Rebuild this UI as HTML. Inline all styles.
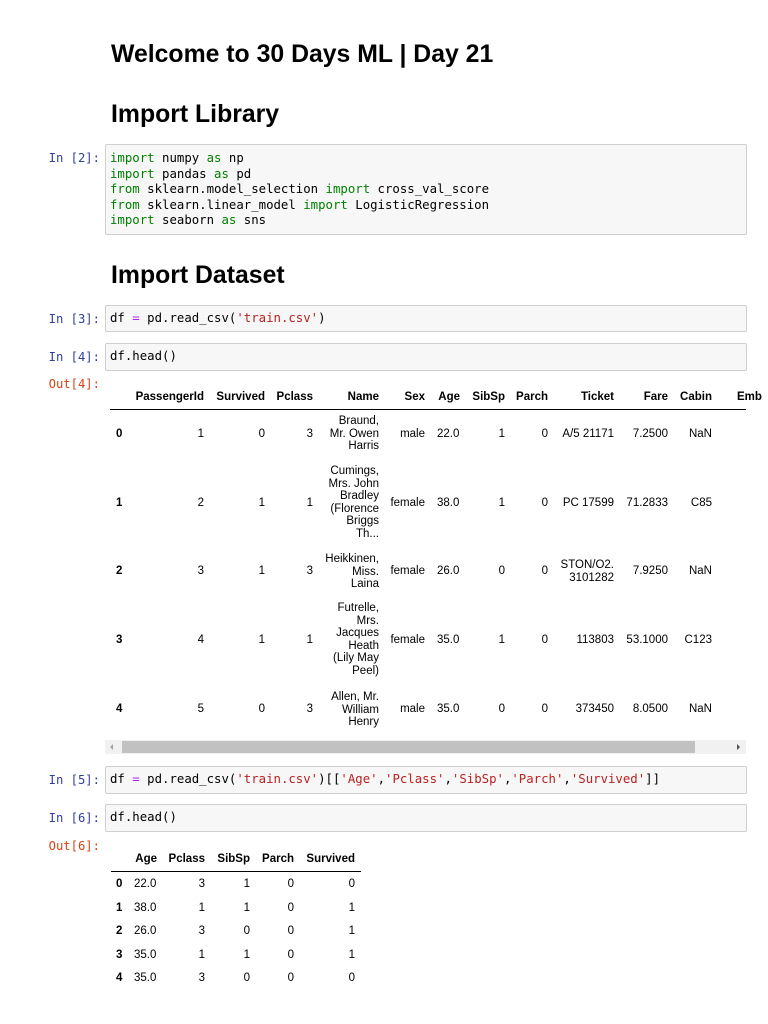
<!DOCTYPE html>
<html><head><meta charset="utf-8"><style>
body{margin:0;width:768px;height:1024px;background:#fff;position:relative;overflow:hidden;font-family:"Liberation Sans",Arial,sans-serif;color:#000}
.a{position:absolute;white-space:nowrap}
h1{position:absolute;margin:0;font-size:24.8px;font-weight:bold;left:111px;white-space:nowrap}
.box{position:absolute;left:105px;width:640px;border:1px solid #cfcfcf;background:#f7f7f7;border-radius:2px}
.code{font-family:"DejaVu Sans Mono","Liberation Mono",monospace;font-size:12.35px;line-height:15.5px;position:absolute;left:110px;white-space:pre;color:#000}
.p{font-family:"DejaVu Sans Mono","Liberation Mono",monospace;font-size:12.2px;position:absolute;right:668px;color:#303f9f;white-space:nowrap}
.o{color:#d84315}
.k{color:#008000}
.s{color:#ba2121}
.op{color:#aa22ff}
.t{position:absolute;font-size:11.5px;line-height:12.6px;text-align:right;white-space:nowrap}
.b{font-weight:bold}
</style></head><body>
<h1 style="top:41px">Welcome to 30 Days ML | Day 21</h1>
<h1 style="top:101px">Import Library</h1>
<div class="p" style="top:151px">In [2]:</div>
<div class="box" style="top:144px;height:89px"></div>
<div class="code" style="top:151px"><span class="k">import</span> numpy <span class="k">as</span> np
<span class="k">import</span> pandas <span class="k">as</span> pd
<span class="k">from</span> sklearn.model_selection <span class="k">import</span> cross_val_score
<span class="k">from</span> sklearn.linear_model <span class="k">import</span> LogisticRegression
<span class="k">import</span> seaborn <span class="k">as</span> sns</div>
<h1 style="top:262px">Import Dataset</h1>
<div class="p" style="top:312px">In [3]:</div>
<div class="box" style="top:305px;height:25px"></div>
<div class="code" style="top:311px">df <span class="op">=</span> pd.read_csv(<span class="s">'train.csv'</span>)</div>
<div class="p" style="top:350px">In [4]:</div>
<div class="box" style="top:343px;height:26px"></div>
<div class="code" style="top:349px">df.head()</div>
<div class="p o" style="top:377px">Out[4]:</div>

<div class="a" style="left:110px;top:409px;width:636px;height:1px;background:#000"></div>
<div class="t b" style="right:564px;top:391px">PassengerId</div>
<div class="t b" style="right:503px;top:391px">Survived</div>
<div class="t b" style="right:455px;top:391px">Pclass</div>
<div class="t b" style="right:389px;top:391px">Name</div>
<div class="t b" style="right:343px;top:391px">Sex</div>
<div class="t b" style="right:308px;top:391px">Age</div>
<div class="t b" style="right:263px;top:391px">SibSp</div>
<div class="t b" style="right:220px;top:391px">Parch</div>
<div class="t b" style="right:154px;top:391px">Ticket</div>
<div class="t b" style="right:100px;top:391px">Fare</div>
<div class="t b" style="right:56px;top:391px">Cabin</div>
<div class="t b" style="left:737px;top:391px">Emb</div>

<div class="t b" style="left:116px;top:428px">0</div>
<div class="t" style="right:564px;top:428px">1</div>
<div class="t" style="right:503px;top:428px">0</div>
<div class="t" style="right:455px;top:428px">3</div>
<div class="t" style="right:389px;top:415px">Braund,<br>Mr. Owen<br>Harris</div>
<div class="t" style="right:343px;top:428px">male</div>
<div class="t" style="left:437px;top:428px">22.0</div>
<div class="t" style="right:263px;top:428px">1</div>
<div class="t" style="right:220px;top:428px">0</div>
<div class="t" style="right:154px;top:428px">A/5 21171</div>
<div class="t" style="right:100px;top:428px">7.2500</div>
<div class="t" style="right:56px;top:428px">NaN</div>

<div class="t b" style="left:116px;top:497px">1</div>
<div class="t" style="right:564px;top:497px">2</div>
<div class="t" style="right:503px;top:497px">1</div>
<div class="t" style="right:455px;top:497px">1</div>
<div class="t" style="right:389px;top:465px">Cumings,<br>Mrs. John<br>Bradley<br>(Florence<br>Briggs<br>Th...</div>
<div class="t" style="right:343px;top:497px">female</div>
<div class="t" style="left:437px;top:497px">38.0</div>
<div class="t" style="right:263px;top:497px">1</div>
<div class="t" style="right:220px;top:497px">0</div>
<div class="t" style="right:154px;top:497px">PC 17599</div>
<div class="t" style="right:100px;top:497px">71.2833</div>
<div class="t" style="right:56px;top:497px">C85</div>

<div class="t b" style="left:116px;top:565px">2</div>
<div class="t" style="right:564px;top:565px">3</div>
<div class="t" style="right:503px;top:565px">1</div>
<div class="t" style="right:455px;top:565px">3</div>
<div class="t" style="right:389px;top:553px">Heikkinen,<br>Miss.<br>Laina</div>
<div class="t" style="right:343px;top:565px">female</div>
<div class="t" style="left:437px;top:565px">26.0</div>
<div class="t" style="right:263px;top:565px">0</div>
<div class="t" style="right:220px;top:565px">0</div>
<div class="t" style="right:154px;top:559px">STON/O2.<br>3101282</div>
<div class="t" style="right:100px;top:565px">7.9250</div>
<div class="t" style="right:56px;top:565px">NaN</div>

<div class="t b" style="left:116px;top:634px">3</div>
<div class="t" style="right:564px;top:634px">4</div>
<div class="t" style="right:503px;top:634px">1</div>
<div class="t" style="right:455px;top:634px">1</div>
<div class="t" style="right:389px;top:602px">Futrelle,<br>Mrs.<br>Jacques<br>Heath<br>(Lily May<br>Peel)</div>
<div class="t" style="right:343px;top:634px">female</div>
<div class="t" style="left:437px;top:634px">35.0</div>
<div class="t" style="right:263px;top:634px">1</div>
<div class="t" style="right:220px;top:634px">0</div>
<div class="t" style="right:154px;top:634px">113803</div>
<div class="t" style="right:100px;top:634px">53.1000</div>
<div class="t" style="right:56px;top:634px">C123</div>

<div class="t b" style="left:116px;top:703px">4</div>
<div class="t" style="right:564px;top:703px">5</div>
<div class="t" style="right:503px;top:703px">0</div>
<div class="t" style="right:455px;top:703px">3</div>
<div class="t" style="right:389px;top:691px">Allen, Mr.<br>William<br>Henry</div>
<div class="t" style="right:343px;top:703px">male</div>
<div class="t" style="left:437px;top:703px">35.0</div>
<div class="t" style="right:263px;top:703px">0</div>
<div class="t" style="right:220px;top:703px">0</div>
<div class="t" style="right:154px;top:703px">373450</div>
<div class="t" style="right:100px;top:703px">8.0500</div>
<div class="t" style="right:56px;top:703px">NaN</div>

<div class="a" style="left:105px;top:740px;width:641px;height:14px;background:#f1f1f1"></div>
<div class="a" style="left:122px;top:741px;width:573px;height:12px;background:#c1c1c1"></div>
<div class="a" style="left:110px;top:744px;width:0;height:0;border-top:3px solid transparent;border-bottom:3px solid transparent;border-right:3px solid #a3a3a3"></div>
<div class="a" style="left:737px;top:744px;width:0;height:0;border-top:3px solid transparent;border-bottom:3px solid transparent;border-left:3px solid #505050"></div>

<div class="p" style="top:773px">In [5]:</div>
<div class="box" style="top:766px;height:26px"></div>
<div class="code" style="top:772px">df <span class="op">=</span> pd.read_csv(<span class="s">'train.csv'</span>)[[<span class="s">'Age'</span>,<span class="s">'Pclass'</span>,<span class="s">'SibSp'</span>,<span class="s">'Parch'</span>,<span class="s">'Survived'</span>]]</div>
<div class="p" style="top:811px">In [6]:</div>
<div class="box" style="top:804px;height:26px"></div>
<div class="code" style="top:810px">df.head()</div>
<div class="p o" style="top:839px">Out[6]:</div>

<div class="a" style="left:111px;top:871px;width:250px;height:1px;background:#000"></div>
<div class="t b" style="right:611px;top:853px">Age</div>
<div class="t b" style="right:563px;top:853px">Pclass</div>
<div class="t b" style="right:518px;top:853px">SibSp</div>
<div class="t b" style="right:474px;top:853px">Parch</div>
<div class="t b" style="right:413px;top:853px">Survived</div>

<div class="t b" style="left:116px;top:878px">0</div><div class="t" style="left:134px;top:878px">22.0</div><div class="t" style="right:563px;top:878px">3</div><div class="t" style="right:518px;top:878px">1</div><div class="t" style="right:474px;top:878px">0</div><div class="t" style="right:413px;top:878px">0</div>
<div class="t b" style="left:116px;top:902px">1</div><div class="t" style="left:134px;top:902px">38.0</div><div class="t" style="right:563px;top:902px">1</div><div class="t" style="right:518px;top:902px">1</div><div class="t" style="right:474px;top:902px">0</div><div class="t" style="right:413px;top:902px">1</div>
<div class="t b" style="left:116px;top:925px">2</div><div class="t" style="left:134px;top:925px">26.0</div><div class="t" style="right:563px;top:925px">3</div><div class="t" style="right:518px;top:925px">0</div><div class="t" style="right:474px;top:925px">0</div><div class="t" style="right:413px;top:925px">1</div>
<div class="t b" style="left:116px;top:949px">3</div><div class="t" style="left:134px;top:949px">35.0</div><div class="t" style="right:563px;top:949px">1</div><div class="t" style="right:518px;top:949px">1</div><div class="t" style="right:474px;top:949px">0</div><div class="t" style="right:413px;top:949px">1</div>
<div class="t b" style="left:116px;top:972px">4</div><div class="t" style="left:134px;top:972px">35.0</div><div class="t" style="right:563px;top:972px">3</div><div class="t" style="right:518px;top:972px">0</div><div class="t" style="right:474px;top:972px">0</div><div class="t" style="right:413px;top:972px">0</div>
</body></html>
